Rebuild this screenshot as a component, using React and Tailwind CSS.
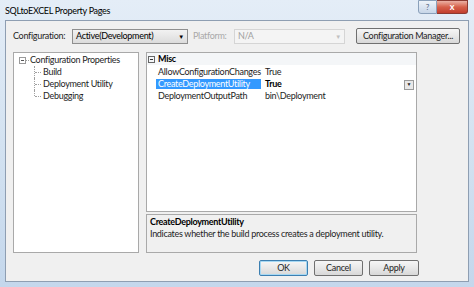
import React from "react";

const font = { fontFamily: 'Lato, "Noto Sans", sans-serif' };

const Combo = ({ label, disabled, width }) => (
  <div
    className={`flex items-center justify-between h-[15px] px-[3px] border ${
      disabled ? "border-[#d5d5d5] bg-[#f4f4f4] text-[#a0a0a0]" : "border-[#8f8f8f] bg-gradient-to-b from-[#f2f2f2] to-[#dcdcdc] text-black"
    } ${width}`}
  >
    <span>{label}</span>
    <span className={`text-[6px] ${disabled ? "text-[#c0c0c0]" : "text-black"}`}>▼</span>
  </div>
);

const Button = ({ children, focused, width }) => (
  <div
    className={`flex items-center justify-center h-[16px] rounded-[2px] border ${
      focused ? "border-[#3c7fb1] shadow-[inset_0_0_0_1px_#a6d8f3]" : "border-[#707070]"
    } bg-gradient-to-b from-[#f6f6f6] via-[#e8e8e8] to-[#d8d8d8] ${width}`}
  >
    {children}
  </div>
);

const TreeLeaf = ({ children, last }) => (
  <div className="flex h-[12px]">
    <div className={`w-[6px] ml-[20px] border-l border-dotted border-[#a0a0a0] ${last ? "h-[6px]" : "h-[12px]"}`}>
      <div className="mt-[6px] w-[6px] border-t border-dotted border-[#a0a0a0]" />
    </div>
    <span className="ml-[3px] leading-[12px]">{children}</span>
  </div>
);

export default function App() {
  return (
    <div
      className="w-[474px] h-[287px] flex flex-col px-[5px] pb-[5px] bg-gradient-to-b from-[#e4edf7] via-[#d3e2f1] to-[#c4d7ec] text-[9px] tracking-[-0.3px] text-[#1e1e1e] overflow-hidden whitespace-nowrap"
      style={font}
    >
      {/* Title bar */}
      <div className="flex justify-between h-[20px] shrink-0">
        <span className="pt-[4px] text-black">SQLtoEXCEL Property Pages</span>
        <div className="flex h-[14px] mr-[1px]">
          <div className="w-[19px] flex items-center justify-center border border-[#8aa0ba] rounded-bl-[3px] bg-gradient-to-b from-[#eef3f9] to-[#c7d6e8] text-[8px] text-[#52657c]">?</div>
          <div className="w-[31px] flex items-center justify-center border border-l-0 border-[#8c3a32] rounded-br-[3px] bg-gradient-to-b from-[#eab0a4] via-[#d6604b] to-[#c23e2e] text-[9px] font-bold text-white">x</div>
        </div>
      </div>

      {/* Body */}
      <div className="flex-1 flex flex-col bg-[#f0f0f0] border border-[#8e9eb2] pt-[7px] pl-[7px] pr-[8px] pb-[4px]">
        {/* Configuration row */}
        <div className="flex items-center h-[16px]">
          <span className="w-[59px]">Configuration:</span>
          <Combo label="Active(Development)" width="w-[116px]" />
          <span className="ml-[5px] w-[41px] text-[#a8a8a8]">Platform:</span>
          <Combo label="N/A" disabled width="w-[111px]" />
          <div className="ml-[11px]">
            <Button width="w-[104px]">Configuration Manager...</Button>
          </div>
        </div>

        {/* Main area */}
        <div className="flex mt-[8px] h-[201px]">
          {/* Tree */}
          <div className="w-[126px] bg-white border border-[#a9a9a9] pt-[1px]">
            <div className="flex items-center h-[12px] pl-[5px]">
              <span className="w-[7px] h-[7px] border border-[#9a9a9a] flex items-center justify-center">
                <span className="w-[3px] h-px bg-[#555]" />
              </span>
              <div className="w-[3px] border-t border-dotted border-[#a0a0a0]" />
              <span className="ml-[1px]">Configuration Properties</span>
            </div>
            <TreeLeaf>Build</TreeLeaf>
            <TreeLeaf>Deployment Utility</TreeLeaf>
            <TreeLeaf last>Debugging</TreeLeaf>
          </div>

          {/* Property grid + description */}
          <div className="w-[271px] ml-[7px] flex flex-col">
            <div className="h-[160px] bg-white border border-[#a9a9a9]">
              <div className="flex items-center h-[12px] bg-[#f4f6f8]">
                <span className="w-[7px] h-[7px] ml-[1px] border border-[#666] flex items-center justify-center">
                  <span className="w-[3px] h-px bg-[#333]" />
                </span>
                <span className="ml-[3px] font-bold text-black">Misc</span>
              </div>
              <div className="flex items-center h-[12px] mt-[1px]">
                <span className="w-[114px] pl-[11px]">AllowConfigurationChanges</span>
                <span className="ml-[4px]">True</span>
              </div>
              <div className="flex items-center h-[12px]">
                <span className="ml-[9px] w-[105px] h-[10px] flex items-center pl-[2px] bg-[#3399ff] text-white">CreateDeploymentUtility</span>
                <span className="ml-[4px] font-bold text-black flex-1">True</span>
                <span className="w-[10px] h-[10px] mr-[2px] mt-[2px] border border-[#9a9a9a] bg-[#e8e8e8] flex items-center justify-center text-[5px] tracking-normal">▼</span>
              </div>
              <div className="flex items-center h-[12px]">
                <span className="w-[114px] pl-[11px]">DeploymentOutputPath</span>
                <span className="ml-[4px]">bin\Deployment</span>
              </div>
            </div>
            <div className="mt-[2px] flex-1 border border-[#a9a9a9] px-[3px] pt-[1px] leading-[12px]">
              <div className="font-bold text-black">CreateDeploymentUtility</div>
              <div>Indicates whether the build process creates a deployment utility.</div>
            </div>
          </div>
        </div>

        {/* Buttons */}
        <div className="flex mt-[7px] ml-[246px] gap-[6px]">
          <Button focused width="w-[49px]">OK</Button>
          <Button width="w-[49px]">Cancel</Button>
          <Button width="w-[50px]">Apply</Button>
        </div>
      </div>
    </div>
  );
}
